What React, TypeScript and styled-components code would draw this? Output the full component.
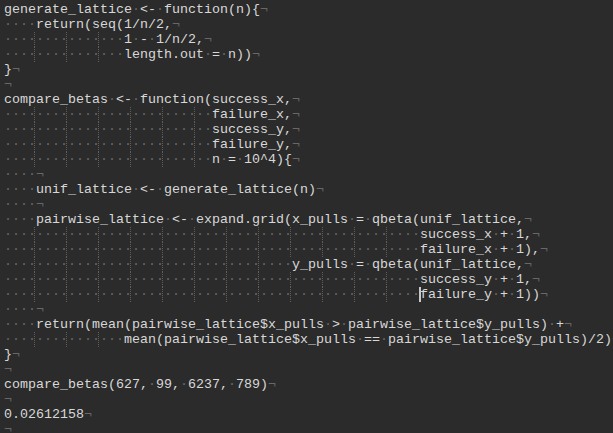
import React from "react";
import styled, { createGlobalStyle } from "styled-components";

const Global = createGlobalStyle`
  html, body { margin: 0; padding: 0; background: #2b2b2b; }
  body { overflow: hidden; }
`;

const Editor = styled.div`
  width: 613px;
  height: 433px;
  box-sizing: border-box;
  padding: 2px 0 0 4px;
  background: #2b2b2b;
  overflow: hidden;
  font-family: "Liberation Mono", "DejaVu Sans Mono", monospace;
  font-size: 13.333px;
  line-height: 15px;
  color: #d8d8d8;
`;

const Line = styled.div`
  position: relative;
  height: 15px;
  white-space: pre;
`;

const Ws = styled.span`
  color: #686868;
`;

const Eol = styled.span`
  color: #686868;
`;

const Guide = styled.span<{ $col: number }>`
  position: absolute;
  top: 0;
  bottom: 0;
  left: ${(p) => p.$col * 8 - 2}px;
  width: 1px;
  background: repeating-linear-gradient(to bottom, #5e5e5e 0 1px, transparent 1px 2px);
`;

const Cursor = styled.span<{ $col: number }>`
  position: absolute;
  top: 0;
  height: 15px;
  left: ${(p) => p.$col * 8 - 1}px;
  width: 2px;
  background: #c8c8c8;
`;

type L = { text: string; guides?: number; cursor?: number };

const sp = (n: number) => " ".repeat(n);

const lines: L[] = [
  { text: "generate_lattice <- function(n){" },
  { text: "    return(seq(1/n/2," },
  { text: sp(15) + "1 - 1/n/2,", guides: 3 },
  { text: sp(15) + "length.out = n))", guides: 3 },
  { text: "}" },
  { text: "" },
  { text: "compare_betas <- function(success_x," },
  { text: sp(26) + "failure_x,", guides: 6 },
  { text: sp(26) + "success_y,", guides: 6 },
  { text: sp(26) + "failure_y,", guides: 6 },
  { text: sp(26) + "n = 10^4){", guides: 6 },
  { text: "    " },
  { text: "    unif_lattice <- generate_lattice(n)" },
  { text: "    " },
  { text: "    pairwise_lattice <- expand.grid(x_pulls = qbeta(unif_lattice," },
  { text: sp(52) + "success_x + 1,", guides: 12 },
  { text: sp(52) + "failure_x + 1),", guides: 12 },
  { text: sp(36) + "y_pulls = qbeta(unif_lattice,", guides: 8 },
  { text: sp(52) + "success_y + 1,", guides: 12 },
  { text: sp(52) + "failure_y + 1))", guides: 12, cursor: 52 },
  { text: "    " },
  { text: "    return(mean(pairwise_lattice$x_pulls > pairwise_lattice$y_pulls) +" },
  { text: sp(15) + "mean(pairwise_lattice$x_pulls == pairwise_lattice$y_pulls)/2)", guides: 3 },
  { text: "}" },
  { text: "" },
  { text: "compare_betas(627, 99, 6237, 789)" },
  { text: "" },
  { text: "0.02612158" },
  { text: "" },
];

function renderText(text: string) {
  const parts = text.split(/( +)/).filter((s) => s.length > 0);
  return parts.map((p, i) =>
    p[0] === " " ? <Ws key={i}>{"·".repeat(p.length)}</Ws> : <React.Fragment key={i}>{p}</React.Fragment>
  );
}

export default function App() {
  return (
    <>
      <Global />
      <Editor>
        {lines.map((l, i) => (
          <Line key={i}>
            {renderText(l.text)}
            <Eol>¬</Eol>
            {Array.from({ length: l.guides ?? 0 }, (_, g) => (
              <Guide key={g} $col={(g + 1) * 4} />
            ))}
            {l.cursor !== undefined && <Cursor $col={l.cursor} />}
          </Line>
        ))}
      </Editor>
    </>
  );
}
